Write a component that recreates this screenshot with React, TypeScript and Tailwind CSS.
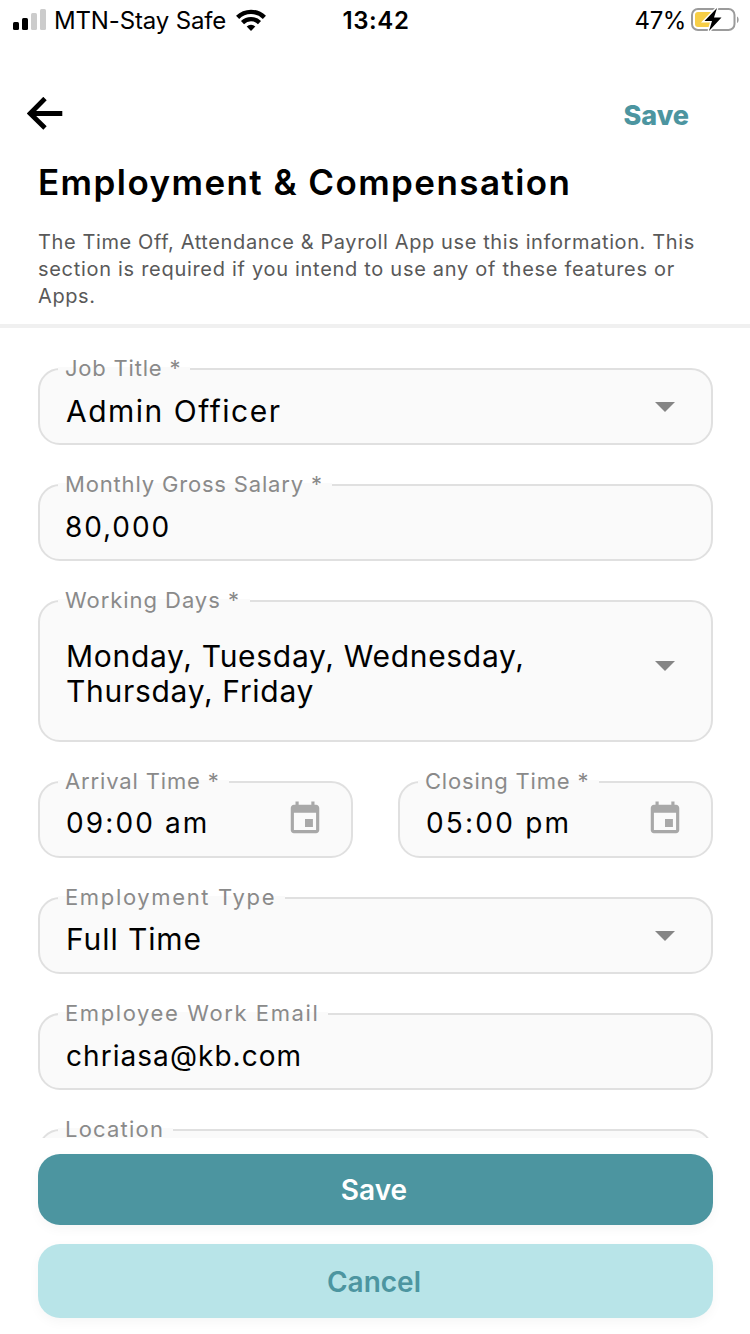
import React from 'react';
import clsx from 'clsx';

interface FieldProps {
    label: string;
    labelClass: string;
    value?: string;
    valueClass?: string;
    icon?: 'arrow' | 'calendar';
    className?: string;
}

const CalendarIcon: React.FC = () => (
    <svg className="w-[38px] h-[38px] shrink-0" viewBox="0 0 24 24" fill="#a8a8a8">
        <path d="M17 12h-5v5h5v-5zM16 1v2H8V1H6v2H5c-1.11 0-1.99.9-1.99 2L3 19c0 1.1.89 2 2 2h14c1.1 0 2-.9 2-2V5c0-1.1-.9-2-2-2h-1V1h-2zm3 18H5V8h14v11z" />
    </svg>
);

const ArrowIcon: React.FC = () => (
    <svg className="w-5 h-[10px] shrink-0" viewBox="0 0 20 10" fill="#858585">
        <path d="M0 0h20L10 10z" />
    </svg>
);

const Field: React.FC<FieldProps> = ({ label, labelClass, value, valueClass, icon, className }) => (
    <div
        className={clsx(
            'relative flex justify-between rounded-[22px] border-2 border-[#e0e0e0] bg-[#fafafa] pl-[26px]',
            className ?? 'h-[77px]'
        )}
    >
        {/* Label sits in a gap of the top border */}
        <div className={clsx('absolute -top-[3px] left-[18px] h-[4px] bg-[#fafafa]', labelClass)}>
            <span className="absolute -top-[8px] left-[7px] whitespace-nowrap text-[22px] leading-[18px] text-[#8a8a8a]">
                {label}
            </span>
        </div>
        <div className={clsx('whitespace-pre leading-[35px] text-black', valueClass)}>{value}</div>
        {icon === 'arrow' && (
            <div className={clsx('pr-[36px]', className ? 'pt-[59px]' : 'pt-[32px]')}>
                <ArrowIcon />
            </div>
        )}
        {icon === 'calendar' && (
            <div className="pr-[27px] pt-[17px]">
                <CalendarIcon />
            </div>
        )}
    </div>
);

const StatusBar: React.FC = () => (
    <div className="flex h-[40px] items-center pl-[13px] pr-[11px] text-[24px] leading-[40px] text-black">
        <div className="flex flex-1 items-center">
            <svg className="w-[33px] h-[22px]" viewBox="0 0 33 22">
                <rect x="0" y="13" width="6" height="8" rx="1.5" fill="#000" />
                <rect x="9" y="9" width="6" height="12" rx="1.5" fill="#000" />
                <rect x="18" y="4" width="6" height="17" rx="1.5" fill="#ccc" />
                <rect x="27" y="0" width="6" height="21" rx="1.5" fill="#ccc" />
            </svg>
            <span className="ml-[8px] pt-[2px] whitespace-nowrap tracking-[-0.15px]">MTN-Stay Safe</span>
            <svg className="ml-[10px] w-[30px] h-[22px]" viewBox="0 0 30 22">
                <g fill="none" stroke="#000" strokeWidth="4.4">
                    <path d="M1.6 8.4a19 19 0 0 1 26.8 0" />
                    <path d="M6.5 13.6a12.2 12.2 0 0 1 17 0" />
                </g>
                <path d="M15 22l-4.3-4.400a6.200 6.200 0 0 1 8.600 0z" />
            </svg>
        </div>
        <span className="pt-[2px] font-semibold tracking-[0.6px]">13:42</span>
        <div className="flex flex-1 items-center justify-end">
            <span className="pt-[2px] tracking-[-0.4px]">47%</span>
            <svg className="ml-[5px] w-[48px] h-[26px]" viewBox="0 0 48 26">
                <rect x="1" y="2" width="42.5" height="21" rx="6" fill="#fff" stroke="#9b9b9b" strokeWidth="2" />
                <path d="M46 9.5c2.2 1 2.2 5.5 0 6.5z" fill="#9b9b9b" />
                <path d="M7 5h14v15H7a3 3 0 0 1-3-3V8a3 3 0 0 1 3-3z" fill="#f7ce46" />
                <path
                    d="M26 1L13.5 14h7.5l-3 10L30.5 10.5h-7.5z"
                    fill="#000"
                    stroke="#fff"
                    strokeWidth="3"
                    paintOrder="stroke"
                />
            </svg>
        </div>
    </div>
);

const App: React.FC = () => {
    return (
        <div className="flex h-[1334px] w-[750px] flex-col overflow-hidden bg-white font-['Inter',sans-serif]">
            <StatusBar />

            <header className="h-[288px] shrink-0 border-b-4 border-[#f0f0f0] pl-[38px] pr-[40px]">
                <div className="flex h-[110px] items-start justify-between pr-[21px] pt-[57px]">
                    <svg className="-ml-[11px] w-[36px] h-[34px]" viewBox="0 0 36 34" fill="none" stroke="#000" strokeWidth="4.8">
                        <path d="M35.3 16.5H3M18 1.500L3.200 16.500l14.800 14.500" />
                    </svg>
                    <button className="mt-[2px] text-[27px] font-extrabold leading-[34px] text-[#4c95a0]">Save</button>
                </div>
                <h1 className="mt-[10px] whitespace-nowrap text-[35px] font-semibold leading-[44px] tracking-[1.42px] text-black">
                    Employment &amp; Compensation
                </h1>
                <p className="mt-[25px] whitespace-pre text-[20px] leading-[27px] tracking-[0.61px] text-[#595959]">
                    <span className="block">The Time Off, Attendance &amp; Payroll App use this information. This</span>
                    <span className="block tracking-[0.7px]">section is required if you intend to use any of these features or</span>
                    <span className="block">Apps.</span>
                </p>
            </header>

            <main className="flex h-[810px] shrink-0 flex-col gap-[39px] overflow-hidden px-[38px] pr-[37px] pt-[40px] *:shrink-0">
                <Field
                    label="Job Title *"
                    labelClass="w-[132px] tracking-[0.8px]"
                    value="Admin Officer"
                    valueClass="pt-[24px] text-[30px] tracking-[1.5px]"
                    icon="arrow"
                />
                <Field
                    label="Monthly Gross Salary *"
                    labelClass="w-[274px] tracking-[0.83px]"
                    value="80,000"
                    valueClass="pt-[24px] text-[28px] tracking-[1.9px] -ml-[1px]"
                />
                <Field
                    label="Working Days *"
                    labelClass="w-[192px] tracking-[0.95px]"
                    value={'Monday, Tuesday, Wednesday,\nThursday, Friday'}
                    valueClass="pt-[37px] text-[30px] tracking-[0.7px]"
                    icon="arrow"
                    className="h-[142px]"
                />
                <div className="grid grid-cols-2 gap-[45px]">
                    <Field
                        label="Arrival Time *"
                        labelClass="w-[171px] tracking-[0.85px]"
                        value="09:00 am"
                        valueClass="pt-[23px] text-[28px] tracking-[2.1px]"
                        icon="calendar"
                    />
                    <Field
                        label="Closing Time *"
                        labelClass="w-[181px] tracking-[0.8px]"
                        value="05:00 pm"
                        valueClass="pt-[23px] text-[28px] tracking-[2.2px]"
                        icon="calendar"
                    />
                </div>
                <Field
                    label="Employment Type"
                    labelClass="w-[227px] tracking-[1.65px]"
                    value="Full Time"
                    valueClass="pt-[23px] text-[30px] tracking-[0.9px]"
                    icon="arrow"
                />
                <Field
                    label="Employee Work Email"
                    labelClass="w-[270px] tracking-[1.6px]"
                    value="chriasa@kb.com"
                    valueClass="pt-[24px] text-[28px] tracking-[1.05px]"
                />
                <Field label="Location" labelClass="w-[115px] tracking-[1.2px]" />
            </main>

            <footer className="flex flex-col gap-[19px] pl-[38px] pr-[37px] pt-[16px]">
                <button className="h-[71px] rounded-[22px] bg-[#4c95a0] pr-[3px] pt-[1px] text-[28px] font-semibold text-white shadow-[0_4px_12px_rgba(0,0,0,0.04)]">
                    Save
                </button>
                <button className="h-[74px] rounded-[22px] bg-[#b8e4e8] pr-[3px] pt-[2px] text-[28px] font-semibold text-[#4c95a0] shadow-[0_4px_12px_rgba(0,0,0,0.04)]">
                    Cancel
                </button>
            </footer>
        </div>
    );
};

export default App;
